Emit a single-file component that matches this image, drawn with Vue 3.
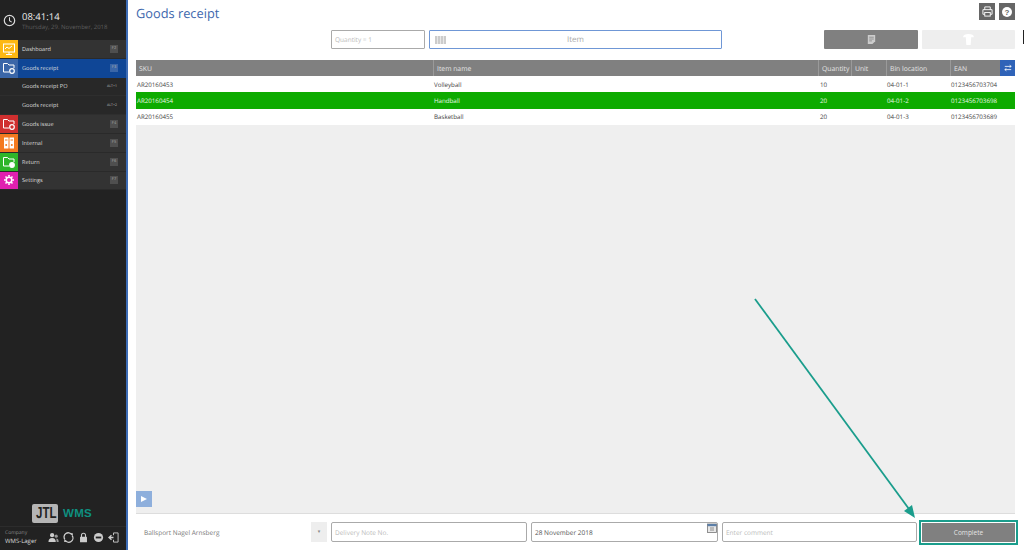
<script setup>
const menuTop = [{ label: 'Dashboard', key: 'F2', color: '#fdb813', icon: 'screen' }]

const menuRest = [
  { label: 'Goods issue', key: 'F4', color: '#d02f2f', icon: 'folder' },
  { label: 'Internal', key: 'F5', color: '#f47a20', icon: 'books' },
  { label: 'Return', key: 'F6', color: '#2fb52a', icon: 'folder', filled: true },
  { label: 'Settings', key: 'F7', color: '#e020b0', icon: 'gear' },
]

const rows = [
  { sku: 'AR20160453', name: 'Volleyball', qty: 10, bin: '04-01-1', ean: '0123456703704' },
  { sku: 'AR20160454', name: 'Handball', qty: 20, bin: '04-01-2', ean: '0123456703698', active: true },
  { sku: 'AR20160455', name: 'Basketball', qty: 20, bin: '04-01-3', ean: '0123456703689' },
]
</script>

<template>
  <div class="app">
    <aside class="sidebar">
      <div class="clock">
        <svg class="clock-icon" viewBox="0 0 14 14">
          <circle cx="7" cy="7" r="5.6" fill="none" stroke="#ddd" stroke-width="1.3" />
          <path d="M7 3.6V7.3L9.4 8.8" fill="none" stroke="#ddd" stroke-width="1.1" />
        </svg>
        <div>
          <div class="time">08:41:14</div>
          <div class="date">Thursday, 29. November, 2018</div>
        </div>
      </div>

      <nav class="menu">
        <div v-for="m in menuTop" :key="m.label" class="item">
          <span class="tile" :style="{ background: m.color }">
            <svg viewBox="0 0 18 18" width="18" height="18">
              <rect x="3.5" y="4" width="11" height="8" fill="none" stroke="#fff" stroke-width="1" />
              <path d="M5 9l2-2 2 1.500 3-2.500M9 12v2M6 14.500h6" fill="none" stroke="#fff" stroke-width="1" />
            </svg>
          </span>
          <span class="label">{{ m.label }}</span>
          <span class="key">{{ m.key }}</span>
        </div>

        <div class="item selected">
          <span class="tile tile-blue">
            <svg viewBox="0 0 18 18" width="18" height="18">
              <path d="M3.500 13V4.500h4l1.500 1.500h5v3M9 13H3.500" fill="none" stroke="#fff" stroke-width="1" />
              <circle cx="12" cy="12" r="2.300" fill="none" stroke="#fff" stroke-width="1.200" />
            </svg>
          </span>
          <span class="label">Goods receipt</span>
          <span class="key">F3</span>
        </div>
        <div class="sub">
          <span>Goods receipt PO</span>
          <span class="alt">ALT+1</span>
        </div>
        <div class="sub">
          <span>Goods receipt</span>
          <span class="alt">ALT+2</span>
        </div>

        <div v-for="m in menuRest" :key="m.label" class="item">
          <span class="tile" :style="{ background: m.color }">
            <svg v-if="m.icon === 'folder'" viewBox="0 0 18 18" width="18" height="18">
              <path d="M3.500 13V4.500h4l1.500 1.500h5v3M9 13H3.500" fill="none" stroke="#fff" stroke-width="1" />
              <circle cx="12" cy="12" r="2.300" :fill="m.filled ? '#fff' : 'none'" stroke="#fff" stroke-width="1.200" />
            </svg>
            <svg v-else-if="m.icon === 'books'" viewBox="0 0 18 18" width="18" height="18">
              <rect x="4" y="3.500" width="4.500" height="11" fill="#fff" />
              <rect x="9.500" y="3.500" width="4.500" height="11" fill="#fff" />
              <path d="M5 6h2.500M10.500 6H13" stroke="#f47a20" stroke-width="1.200" />
              <circle cx="6.200" cy="11" r="1" fill="#f47a20" />
              <circle cx="11.800" cy="11" r="1" fill="#f47a20" />
            </svg>
            <svg v-else viewBox="0 0 18 18" width="18" height="18">
              <circle cx="9" cy="9" r="2.800" fill="none" stroke="#fff" stroke-width="1.500" />
              <path d="M9 4v1.800M9 12.200V14M4 9h1.800M12.200 9H14M5.500 5.500l1.200 1.200M11.300 11.300l1.200 1.200M5.500 12.500l1.200-1.200M11.300 6.700l1.200-1.200" stroke="#fff" stroke-width="1.600" />
            </svg>
          </span>
          <span class="label">{{ m.label }}</span>
          <span class="key">{{ m.key }}</span>
        </div>
      </nav>

      <div class="logo">
        <span class="jtl"><span class="jtl-text">JTL</span></span>
        <span class="wms">WMS</span>
      </div>

      <div class="status">
        <div class="company">
          <div class="company-label">Company</div>
          <div class="company-name">WMS-Lager</div>
        </div>
        <div class="status-icons">
          <svg viewBox="0 0 12 12" width="11" height="11">
            <circle cx="4.500" cy="3.500" r="2.300" fill="#ccc" />
            <path d="M.5 11c0-3 1.500-4.500 4-4.500s4 1.500 4 4.500z" fill="#ccc" />
            <circle cx="9" cy="4.500" r="1.700" fill="#999" />
            <path d="M9 7c1.500 0 2.700 1 2.700 4H9.500z" fill="#999" />
          </svg>
          <svg viewBox="0 0 12 12" width="11" height="11">
            <path d="M2 8A4.400 4.400 0 0 1 9.500 2.800M10 4A4.400 4.400 0 0 1 2.500 9.200" fill="none" stroke="#ccc" stroke-width="1.400" />
            <path d="M8 1l3 .5-.8 3zM4 11l-3-.5.8-3z" fill="#ccc" />
          </svg>
          <svg viewBox="0 0 12 12" width="11" height="11">
            <rect x="2.200" y="5.200" width="7.600" height="6" rx=".6" fill="#ccc" />
            <path d="M3.800 5.500V3.500a2.200 2.200 0 0 1 4.400 0v2" fill="none" stroke="#ccc" stroke-width="1.200" />
          </svg>
          <svg viewBox="0 0 12 12" width="11" height="11">
            <circle cx="6" cy="6" r="5" fill="#ccc" />
            <rect x="3" y="5" width="6" height="2" fill="#222" />
          </svg>
          <svg viewBox="0 0 12 12" width="11" height="11">
            <path d="M6 3.500V1h5v10H6V8.500" fill="none" stroke="#ccc" stroke-width="1" />
            <path d="M1 6h5M3.800 3.500L1 6l2.800 2.500" fill="none" stroke="#ccc" stroke-width="1.400" />
          </svg>
        </div>
      </div>
    </aside>

    <main class="main">
      <header class="top">
        <h1>Goods receipt</h1>
        <div class="top-buttons">
          <button class="square">
            <svg viewBox="0 0 12 12" width="11" height="11">
              <path d="M3 4V1h6v3M3 9H1V4h10v5H9" fill="none" stroke="#fff" stroke-width="1" />
              <rect x="3" y="7" width="6" height="4" fill="none" stroke="#fff" stroke-width="1" />
            </svg>
          </button>
          <button class="square">
            <svg viewBox="0 0 12 12" width="12" height="12">
              <circle cx="6" cy="6" r="5" fill="#fff" />
              <text x="6" y="8.800" class="help">?</text>
            </svg>
          </button>
        </div>
      </header>

      <div class="toolbar">
        <div class="field qty">Quantity = 1</div>
        <div class="field scan">
          <span class="barcode"></span>
          <span class="scan-text">Item</span>
        </div>
        <button class="tool dark">
          <svg viewBox="0 0 12 12" width="11" height="11">
            <path d="M2 1h8v7l-3 3H2z" fill="#ccc" />
            <path d="M3.500 3.500h5M3.500 5.500h5M3.500 7.500h3" stroke="#808080" stroke-width=".8" />
          </svg>
        </button>
        <button class="tool light">
          <svg viewBox="0 0 12 12" width="13" height="13">
            <path d="M1 4c0-2 2-3 5-3s5 1 5 3H8.500L8 11H4l-.5-7z" fill="#fff" />
          </svg>
        </button>
      </div>

      <section class="table">
        <div class="row head">
          <span>SKU</span>
          <span>Item name</span>
          <span>Quantity</span>
          <span>Unit</span>
          <span>Bin location</span>
          <span>EAN</span>
          <span class="columns">
            <svg viewBox="0 0 10 10" width="8" height="8">
              <path d="M1 3h8M7 1.500L9 3 7 4.500M9 7H1M3 5.500L1 7l2 1.500" fill="none" stroke="#fff" stroke-width="1" />
            </svg>
          </span>
        </div>
        <div v-for="r in rows" :key="r.sku" class="row body" :class="{ active: r.active }">
          <span>{{ r.sku }}</span>
          <span>{{ r.name }}</span>
          <span>{{ r.qty }}</span>
          <span></span>
          <span>{{ r.bin }}</span>
          <span>{{ r.ean }}</span>
          <span></span>
        </div>
        <div class="table-rest">
          <button class="play"><span class="triangle"></span></button>
        </div>
      </section>

      <footer class="bottom">
        <div class="select">
          <span class="select-text">Ballsport Nagel Arnsberg</span>
          <span class="select-arrow">▾</span>
        </div>
        <div class="field bottom-field">Delivery Note No.</div>
        <div class="field bottom-field filled">
          28 November 2018
          <svg class="calendar" viewBox="0 0 10 10" width="10" height="10">
            <rect x=".5" y="1" width="9" height="8.500" fill="#e8e8e8" stroke="#777" stroke-width=".8" />
            <rect x=".5" y="1" width="9" height="2.200" fill="#5c7fa8" />
            <path d="M3 5h4M3 7h4" stroke="#777" stroke-width=".8" />
          </svg>
        </div>
        <div class="field bottom-field">Enter comment</div>
        <div class="complete-frame">
          <button class="complete">Complete</button>
        </div>
      </footer>
    </main>

    <svg class="arrow" viewBox="0 0 1024 550" width="1024" height="550">
      <path d="M755 299L909 509" stroke="#1a9d8c" stroke-width="1.800" fill="none" />
      <path d="M915 518L904 511L912 505z" fill="#1a9d8c" />
    </svg>
    <span class="edge-mark"></span>
  </div>
</template>

<style scoped>
.app {
  position: relative;
  display: flex;
  width: 1024px;
  height: 550px;
  overflow: hidden;
  background: #fff;
  font-family: "Open Sans", "Noto Sans", sans-serif;
  color: #444;
  text-rendering: geometricPrecision;
}

.sidebar {
  display: flex;
  flex-direction: column;
  box-sizing: border-box;
  width: 128px;
  flex-shrink: 0;
  background: #222;
  border-right: 2px solid #3d6cb5;
}

.clock {
  display: flex;
  align-items: center;
  gap: 6px;
  height: 40px;
  box-sizing: border-box;
  padding-left: 3px;
}

.clock-icon {
  width: 13px;
  height: 13px;
}

.time {
  font-size: 9.500px;
  line-height: 13px;
  color: #eee;
}

.date {
  font-size: 6px;
  line-height: 8px;
  color: #5d5d5d;
  white-space: nowrap;
}

.menu {
  flex: 1;
}

.item,
.sub {
  display: flex;
  align-items: center;
  height: 18.800px;
  font-size: 5.600px;
  color: #ddd;
  box-sizing: border-box;
}

.item {
  background: #333;
  border-bottom: 1px solid #2a2a2a;
}

.item.selected {
  background: #0f4696;
  border-bottom: 0;
}

.tile {
  display: flex;
  align-items: center;
  justify-content: center;
  width: 18px;
  height: 100%;
  flex-shrink: 0;
}

.tile-blue {
  background: #3a66a8;
}

.label {
  flex: 1;
  padding-left: 4px;
}

.key {
  width: 8px;
  height: 8px;
  margin-right: 8px;
  background: #4f4f4f;
  color: #aaa;
  font-size: 4px;
  line-height: 8px;
  text-align: center;
}

.selected .key {
  background: #3a66a8;
}

.sub {
  justify-content: space-between;
  padding: 0 9px 0 22px;
  background: #282828;
  border-bottom: 1px solid #2e2e2e;
}

.alt {
  font-size: 3.500px;
  color: #bbb;
}

.logo {
  display: flex;
  align-items: center;
  gap: 5px;
  padding-left: 32px;
  margin-bottom: 3px;
}

.jtl {
  width: 26px;
  height: 19px;
  border-radius: 2px;
  background: #b5b5b5;
  color: #222;
  font-family: "Liberation Sans", sans-serif;
  font-weight: 700;
  font-size: 16px;
  line-height: 19px;
  text-align: center;
}

.jtl-text {
  display: inline-block;
  transform: scaleX(.72);
}

.wms {
  color: #0e9080;
  font-family: "Liberation Sans", sans-serif;
  font-weight: 700;
  font-size: 11.500px;
  letter-spacing: .3px;
}

.status {
  display: flex;
  align-items: center;
  justify-content: space-between;
  height: 20px;
  padding: 0 7px 3px 5px;
  border-top: 1px solid #2c2c2c;
}

.company-label {
  font-size: 5px;
  line-height: 7px;
  color: #888;
}

.company-name {
  font-size: 6px;
  line-height: 8px;
  color: #ddd;
}

.status-icons {
  display: flex;
  gap: 4px;
}

.main {
  flex: 1;
  display: flex;
  flex-direction: column;
  min-width: 0;
  padding: 0 9px 8px 8px;
}

.top {
  display: flex;
  justify-content: space-between;
  height: 30px;
  padding-top: 3px;
  box-sizing: border-box;
}

h1 {
  margin: 0;
  font-size: 12.800px;
  line-height: 21px;
  font-weight: 400;
  color: #3d67ad;
}

.top-buttons {
  display: flex;
  gap: 4px;
}

.square {
  display: flex;
  align-items: center;
  justify-content: center;
  width: 16px;
  height: 17px;
  padding: 0;
  border: 0;
  background: #666;
}

.help {
  font-family: "Liberation Sans", sans-serif;
  font-size: 8px;
  font-weight: 700;
  fill: #666;
  text-anchor: middle;
}

.toolbar {
  display: flex;
  align-items: stretch;
  height: 19px;
  margin: 0 0 11px 195px;
}

.field {
  display: flex;
  align-items: center;
  position: relative;
  flex: none;
  box-sizing: border-box;
  border: 1px solid #aaa;
  border-radius: 1px;
  padding-left: 3px;
  font-size: 6.500px;
  color: #bbb;
}

.qty {
  width: 94px;
}

.scan {
  width: 293px;
  margin-left: 4px;
  border-color: #6f97d6;
}

.barcode {
  width: 11px;
  height: 8px;
  margin-left: 2px;
  background: repeating-linear-gradient(90deg, #ccc 0 2px, #e8e8e8 2px 3px);
}

.scan-text {
  position: absolute;
  left: 0;
  right: 0;
  text-align: center;
  font-size: 8px;
  color: #aaa;
}

.tool {
  display: flex;
  align-items: center;
  justify-content: center;
  width: 94px;
  padding: 0;
  border: 0;
  border-radius: 1px;
}

.tool.dark {
  margin-left: 102px;
  background: #808080;
}

.tool.light {
  width: 93px;
  margin-left: 4px;
  background: #eee;
}

.table {
  flex: 1;
  display: flex;
  flex-direction: column;
  min-height: 0;
  background: #efefef;
  border-bottom: 1px solid #ddd;
  margin-bottom: 8px;
}

.row {
  display: grid;
  grid-template-columns: 297px 385px 33px 35px 64px 50px 15px;
  align-items: center;
  font-size: 6.200px;
}

.head {
  height: 16px;
  background: #808080;
  color: #e4e4e4;
  font-size: 6.800px;
}

.head span {
  display: flex;
  align-items: center;
  height: 100%;
  box-sizing: border-box;
  padding-left: 3px;
  border-left: 1px solid #9a9a9a;
}

.head span:first-child {
  border-left: 0;
}

.head .columns {
  justify-content: center;
  padding: 0;
  background: #2f63b8;
  border-left: 0;
}

.body {
  height: 16.300px;
  background: #fff;
  color: #444;
}

.body.active {
  background: #0dab00;
  color: #e8f7e4;
}

.body span:first-child {
  padding-left: 1px;
}

.body span:nth-child(2) {
  padding-left: 1px;
}

.body span:nth-child(3) {
  padding-left: 2px;
}

.body span:nth-child(5),
.body span:nth-child(6) {
  padding-left: 1px;
}

.table-rest {
  flex: 1;
  display: flex;
  align-items: flex-end;
  padding: 0 0 6px 0;
}

.play {
  display: flex;
  align-items: center;
  justify-content: center;
  width: 16px;
  height: 16px;
  padding: 0;
  border: 0;
  background: #8eafdc;
}

.triangle {
  width: 0;
  height: 0;
  border-left: 6px solid #fff;
  border-top: 3px solid transparent;
  border-bottom: 3px solid transparent;
}

.bottom {
  display: flex;
  height: 20px;
  gap: 4px;
  padding-left: 3px;
}

.select {
  display: flex;
  align-items: center;
  justify-content: space-between;
  flex: none;
  width: 188px;
  box-sizing: border-box;
  padding-left: 5px;
  font-size: 6.500px;
  color: #777;
  background: #fff;
}

.select-arrow {
  width: 16px;
  height: 100%;
  background: #eee;
  color: #888;
  font-size: 5px;
  line-height: 20px;
  text-align: center;
}

.bottom-field {
  border-color: #aaa;
  border-radius: 2px;
}

.bottom-field:nth-child(2) {
  width: 196px;
}

.bottom-field:nth-child(3) {
  width: 187px;
}

.bottom-field:nth-child(4) {
  width: 195px;
}

.filled {
  color: #555;
}

.calendar {
  position: absolute;
  top: 0;
  right: 0;
}

.complete-frame {
  flex: none;
  width: 99px;
  height: 25px;
  margin: -2px 0 0 -2px;
  box-sizing: border-box;
  padding: 1px;
  border: 2px solid #1a9d8c;
}

.complete {
  display: block;
  width: 100%;
  height: 100%;
  padding: 0;
  border: 0;
  background: #808080;
  color: #e4e4e4;
  font-family: inherit;
  font-size: 6.500px;
}

.arrow {
  position: absolute;
  left: 0;
  top: 0;
  pointer-events: none;
}

.edge-mark {
  position: absolute;
  right: 0;
  top: 30px;
  width: 1px;
  height: 14px;
  background: #222;
}
</style>
